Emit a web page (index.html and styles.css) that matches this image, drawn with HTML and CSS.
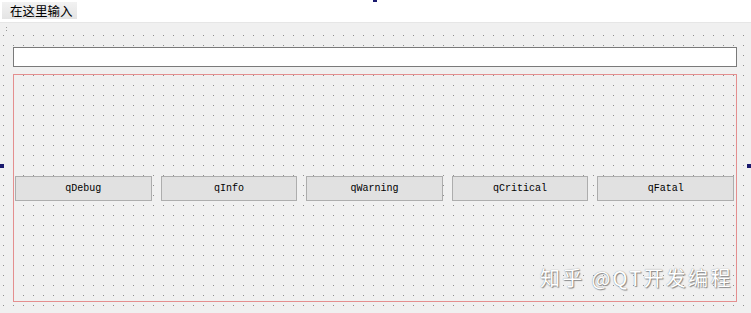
FILE: index.html
```html
<!DOCTYPE html>
<html>
<head>
<meta charset="utf-8">
<link rel="stylesheet" href="styles.css">
</head>
<body>
<div class="page">
  <div class="topbar">
    <div class="tab">在这里输入</div>
  </div>
  <div class="toolbar"><span class="grip"></span></div>
  <div class="canvas">
    <div class="lineedit"></div>
    <div class="layout">
      <div class="btn">qDebug</div>
      <div class="btn">qInfo</div>
      <div class="btn">qWarning</div>
      <div class="btn">qCritical</div>
      <div class="btn">qFatal</div>
    </div>
  </div>
  <span class="handle h-top"></span>
  <span class="handle h-left"></span>
  <span class="handle h-right"></span>
  <div class="watermark">知乎 @QT开发编程</div>
</div>
</body>
</html>
```
FILE: styles.css
```css
html, body {
  margin: 0;
  padding: 0;
  background: #ffffff;
}
.page {
  position: relative;
  width: 751px;
  height: 313px;
  overflow: hidden;
  font-family: "Noto Sans CJK SC", "DejaVu Sans", sans-serif;
}
.topbar {
  height: 22px;
  background: #ffffff;
  display: flex;
  align-items: flex-start;
  padding-top: 2px;
  box-sizing: border-box;
}
.tab {
  margin-left: 2px;
  width: 75px;
  height: 17px;
  background: linear-gradient(#f2f2f2, #e4e4e4);
  font-size: 12.5px;
  line-height: 17px;
  color: #000;
  padding-left: 8px;
  box-sizing: border-box;
}
.toolbar {
  height: 13px;
  background: #f0f0f0;
  border-top: 1px solid #e6e6e6;
  box-sizing: border-box;
  display: flex;
  align-items: center;
  padding-left: 6px;
}
.grip {
  width: 1px;
  height: 7px;
  background-image: radial-gradient(circle, #9a9a9a 0.8px, transparent 1px);
  background-size: 2px 3px;
}
.canvas {
  height: 278px;
  background-color: #f0f0f0;
  background-image: radial-gradient(circle at 0.5px 0.5px, #8e8e8e 0.6px, transparent 0.9px);
  background-size: 10px 10px;
  background-position: 3px 0px;
  padding: 12px 14px 0 13px;
  box-sizing: border-box;
  display: flex;
  flex-direction: column;
}
.lineedit {
  height: 20px;
  background: #ffffff;
  border: 1px solid #7a7a7a;
  box-sizing: border-box;
}
.layout {
  margin-top: 7px;
  height: 228px;
  border: 1px solid #e48f8f;
  box-sizing: border-box;
  display: flex;
  align-items: center;
  gap: 9px;
  padding: 0 2px 0 1px;
}
.btn {
  flex: 1;
  height: 25px;
  background: #e1e1e1;
  border: 1px solid #adadad;
  box-sizing: border-box;
  font-family: "Liberation Mono", "DejaVu Sans Mono", monospace;
  font-size: 10px;
  line-height: 23px;
  text-align: center;
  color: #000;
}
.handle {
  position: absolute;
  width: 4px;
  height: 4px;
  background: #1a1a6e;
}
.h-top { left: 373px; top: 0; height: 2px; }
.h-left { left: 0; top: 164px; }
.h-right { left: 747px; top: 164px; }
.watermark {
  position: absolute;
  left: 540px;
  top: 263px;
  font-size: 20px;
  color: #ffffff;
  text-shadow: 0 0 1px #7a7a7a, 1px 1px 1px #8a8a8a;
  letter-spacing: 2.3px;
  white-space: nowrap;
}
```
